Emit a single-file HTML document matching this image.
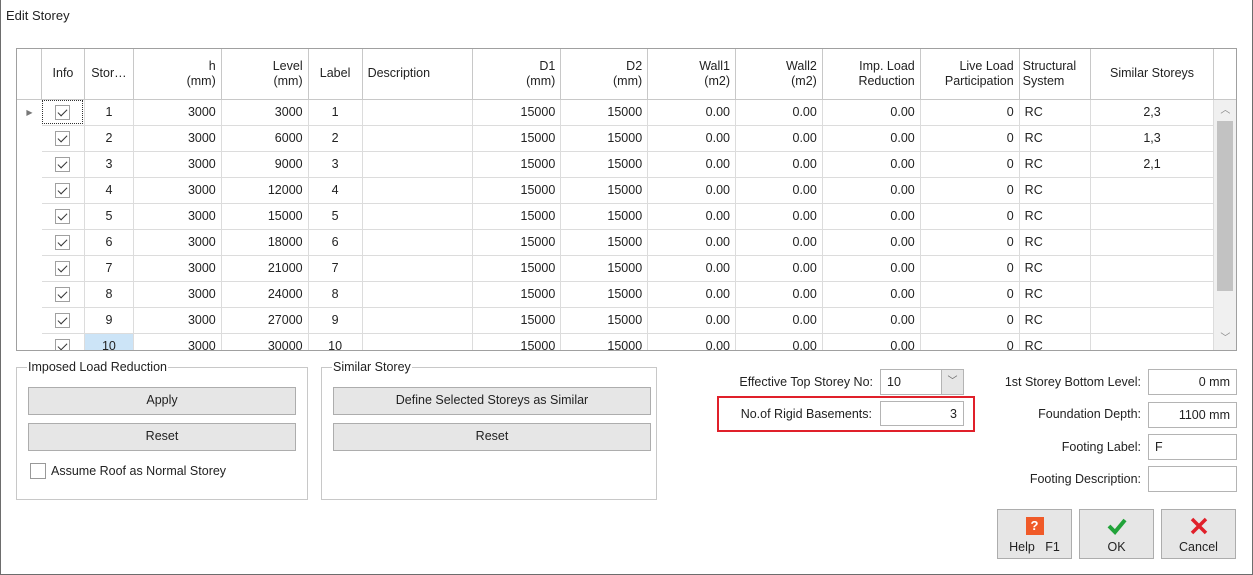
<!DOCTYPE html><html><head><style>
*{box-sizing:border-box}
body{margin:0;width:1253px;height:575px;background:#fff;font-family:"Liberation Sans",sans-serif;font-size:12.5px;color:#222;position:relative;overflow:hidden}
.win{position:absolute;left:0;top:0;width:1253px;height:575px;border:1px solid #6d6d6d;border-top:none}
.abs{position:absolute}
.grid{position:absolute;left:16px;top:48px;width:1221px;height:303px;border:1px solid #a0a0a0;overflow:hidden}
table{border-collapse:collapse;table-layout:fixed}
td{border:1px solid #dcdcdc;height:26px;padding:0 5px;white-space:nowrap;overflow:hidden}
th{border:1px solid #c8c8c8;font-weight:normal;height:50px;padding:0 5px;line-height:15px;border-top:none}
.r{text-align:right}.c{text-align:center}.l{text-align:left}
.cb{display:inline-block;width:15px;height:15px;border:1px solid #a0a0a0;position:relative;vertical-align:middle}
.cb:after{content:"";position:absolute;left:4px;top:1px;width:4px;height:8px;border:solid #333;border-width:0 1.6px 1.6px 0;transform:rotate(45deg)}
.btn{position:absolute;background:#e6e6e6;border:1px solid #adadad;text-align:center;line-height:25px}
.gb{position:absolute;border:1px solid #c8c8c8}
.gl{position:absolute;background:#fff;padding:0 1px;top:-9px;line-height:16px}
.inp{position:absolute;border:1px solid #b4b4b4;background:#fff;height:26px;line-height:24px;padding:0 6px}
.lab{position:absolute;text-align:right;line-height:26px}
</style></head><body>
<div class="win"></div>
<div class="abs" style="left:6px;top:8px;font-size:13px">Edit Storey</div>
<div class="grid">
<table>
<colgroup><col style="width:24px"><col style="width:43px"><col style="width:49px"><col style="width:88px"><col style="width:87px"><col style="width:54px"><col style="width:111px"><col style="width:88px"><col style="width:87px"><col style="width:88px"><col style="width:87px"><col style="width:98px"><col style="width:99px"><col style="width:71px"><col style="width:124px"><col style="width:22px"></colgroup>
<tr><th style="border-left:none"></th><th class="c">Info</th><th class="c">Stor…</th><th class="r">h<br>(mm)</th><th class="r">Level<br>(mm)</th><th class="c">Label</th><th class="l">Description</th><th class="r">D1<br>(mm)</th><th class="r">D2<br>(mm)</th><th class="r">Wall1<br>(m2)</th><th class="r">Wall2<br>(m2)</th><th class="r">Imp. Load<br>Reduction</th><th class="r">Live Load<br>Participation</th><th class="l" style="padding:0 3px">Structural<br>System</th><th class="c">Similar Storeys</th><th style="border-right:none"></th></tr>
<tr><td style="border-color:#fff;font-size:8px;color:#777" class="c">▶</td><td class="c" style="outline:1px dotted #333;outline-offset:-2px"><span class="cb"></span></td><td class="c">1</td><td class="r">3000</td><td class="r">3000</td><td class="c">1</td><td></td><td class="r">15000</td><td class="r">15000</td><td class="r">0.00</td><td class="r">0.00</td><td class="r">0.00</td><td class="r">0</td><td>RC</td><td class="c">2,3</td><td rowspan="10" style="padding:0;vertical-align:top;background:#f0f0f0;border:none;position:relative"><div style="position:absolute;left:3px;top:0;width:16px;height:22px;color:#888;text-align:center;line-height:22px;font-size:10px">︿</div><div style="position:absolute;left:3px;top:21px;width:16px;height:170px;background:#c2c2c2"></div><div style="position:absolute;left:3px;top:228px;width:16px;height:22px;color:#888;text-align:center;line-height:22px;font-size:10px">﹀</div></td></tr>
<tr><td style="border-color:#fff"></td><td class="c"><span class="cb"></span></td><td class="c">2</td><td class="r">3000</td><td class="r">6000</td><td class="c">2</td><td></td><td class="r">15000</td><td class="r">15000</td><td class="r">0.00</td><td class="r">0.00</td><td class="r">0.00</td><td class="r">0</td><td>RC</td><td class="c">1,3</td></tr>
<tr><td style="border-color:#fff"></td><td class="c"><span class="cb"></span></td><td class="c">3</td><td class="r">3000</td><td class="r">9000</td><td class="c">3</td><td></td><td class="r">15000</td><td class="r">15000</td><td class="r">0.00</td><td class="r">0.00</td><td class="r">0.00</td><td class="r">0</td><td>RC</td><td class="c">2,1</td></tr>
<tr><td style="border-color:#fff"></td><td class="c"><span class="cb"></span></td><td class="c">4</td><td class="r">3000</td><td class="r">12000</td><td class="c">4</td><td></td><td class="r">15000</td><td class="r">15000</td><td class="r">0.00</td><td class="r">0.00</td><td class="r">0.00</td><td class="r">0</td><td>RC</td><td></td></tr>
<tr><td style="border-color:#fff"></td><td class="c"><span class="cb"></span></td><td class="c">5</td><td class="r">3000</td><td class="r">15000</td><td class="c">5</td><td></td><td class="r">15000</td><td class="r">15000</td><td class="r">0.00</td><td class="r">0.00</td><td class="r">0.00</td><td class="r">0</td><td>RC</td><td></td></tr>
<tr><td style="border-color:#fff"></td><td class="c"><span class="cb"></span></td><td class="c">6</td><td class="r">3000</td><td class="r">18000</td><td class="c">6</td><td></td><td class="r">15000</td><td class="r">15000</td><td class="r">0.00</td><td class="r">0.00</td><td class="r">0.00</td><td class="r">0</td><td>RC</td><td></td></tr>
<tr><td style="border-color:#fff"></td><td class="c"><span class="cb"></span></td><td class="c">7</td><td class="r">3000</td><td class="r">21000</td><td class="c">7</td><td></td><td class="r">15000</td><td class="r">15000</td><td class="r">0.00</td><td class="r">0.00</td><td class="r">0.00</td><td class="r">0</td><td>RC</td><td></td></tr>
<tr><td style="border-color:#fff"></td><td class="c"><span class="cb"></span></td><td class="c">8</td><td class="r">3000</td><td class="r">24000</td><td class="c">8</td><td></td><td class="r">15000</td><td class="r">15000</td><td class="r">0.00</td><td class="r">0.00</td><td class="r">0.00</td><td class="r">0</td><td>RC</td><td></td></tr>
<tr><td style="border-color:#fff"></td><td class="c"><span class="cb"></span></td><td class="c">9</td><td class="r">3000</td><td class="r">27000</td><td class="c">9</td><td></td><td class="r">15000</td><td class="r">15000</td><td class="r">0.00</td><td class="r">0.00</td><td class="r">0.00</td><td class="r">0</td><td>RC</td><td></td></tr>
<tr><td style="border-color:#fff"></td><td class="c"><span class="cb"></span></td><td class="c" style="background:#cce4f7">10</td><td class="r">3000</td><td class="r">30000</td><td class="c">10</td><td></td><td class="r">15000</td><td class="r">15000</td><td class="r">0.00</td><td class="r">0.00</td><td class="r">0.00</td><td class="r">0</td><td>RC</td><td></td></tr>
</table></div>

<div class="gb" style="left:16px;top:367px;width:292px;height:133px"><div class="gl" style="left:10px">Imposed Load Reduction</div></div>
<div class="btn" style="left:28px;top:387px;width:268px;height:28px">Apply</div>
<div class="btn" style="left:28px;top:423px;width:268px;height:28px">Reset</div>
<div class="abs" style="left:30px;top:463px;width:16px;height:16px;border:1px solid #999"></div>
<div class="abs" style="left:51px;top:463px;line-height:16px">Assume Roof as Normal Storey</div>

<div class="gb" style="left:321px;top:367px;width:336px;height:133px"><div class="gl" style="left:10px">Similar Storey</div></div>
<div class="btn" style="left:333px;top:387px;width:318px;height:28px">Define Selected Storeys as Similar</div>
<div class="btn" style="left:333px;top:423px;width:318px;height:28px">Reset</div>

<div class="lab" style="left:700px;top:369px;width:173px">Effective Top Storey No:</div>
<div class="inp" style="left:880px;top:369px;width:84px;padding-right:24px">10</div>
<div class="abs" style="left:941px;top:370px;width:22px;height:24px;background:#e6e6e6;border-left:1px solid #b4b4b4;text-align:center;line-height:24px;color:#666;font-size:10px">﹀</div>
<div class="abs" style="left:717px;top:396px;width:258px;height:36px;border:2px solid #e0202a"></div>
<div class="lab" style="left:700px;top:401px;width:172px">No.of Rigid Basements:</div>
<div class="inp" style="left:880px;top:401px;width:84px;text-align:right;height:25px">3</div>

<div class="lab" style="left:960px;top:369px;width:181px">1st Storey Bottom Level:</div>
<div class="inp" style="left:1148px;top:369px;width:89px;text-align:right">0 mm</div>
<div class="lab" style="left:960px;top:401px;width:181px">Foundation Depth:</div>
<div class="inp" style="left:1148px;top:402px;width:89px;text-align:right">1100 mm</div>
<div class="lab" style="left:960px;top:434px;width:181px">Footing Label:</div>
<div class="inp" style="left:1148px;top:434px;width:89px">F</div>
<div class="lab" style="left:960px;top:466px;width:181px">Footing Description:</div>
<div class="inp" style="left:1148px;top:466px;width:89px"></div>

<div class="btn" style="left:997px;top:509px;width:75px;height:50px;line-height:14px">
<div style="width:18px;height:18px;background:#f05a28;color:#fff;font-weight:bold;font-size:13px;line-height:18px;margin:7px auto 5px">?</div>Help&nbsp;&nbsp; F1</div>
<div class="btn" style="left:1079px;top:509px;width:75px;height:50px;line-height:14px">
<svg width="22" height="18" style="display:block;margin:7px auto 5px" viewBox="0 0 22 18"><path d="M3 9 L9 15 L19 3" stroke="#22a33a" stroke-width="4" fill="none"/></svg>OK</div>
<div class="btn" style="left:1161px;top:509px;width:75px;height:50px;line-height:14px">
<svg width="20" height="18" style="display:block;margin:7px auto 5px" viewBox="0 0 20 18"><path d="M3 2 L17 16 M17 2 L3 16" stroke="#e0202a" stroke-width="3.5" fill="none"/></svg>Cancel</div>
</body></html>
